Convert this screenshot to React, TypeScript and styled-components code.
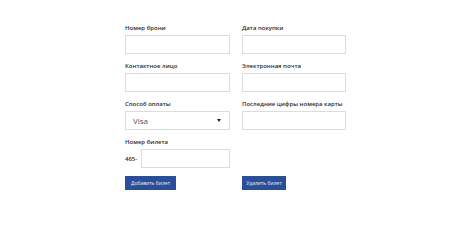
import styled, { createGlobalStyle } from "styled-components";

const GlobalStyle = createGlobalStyle`
  html, body {
    margin: 0;
    padding: 0;
    background: #ffffff;
    font-family: "Open Sans", "Liberation Sans", sans-serif;
  }
`;

const Page = styled.div`
  padding: 24px 0 0 125px;
`;

const Form = styled.div`
  display: grid;
  grid-template-columns: 105px 104px;
  column-gap: 12px;
  row-gap: 8px;
`;

const Field = styled.div`
  display: flex;
  flex-direction: column;
`;

const Label = styled.div`
  height: 8px;
  line-height: 8px;
  margin-bottom: 3px;
  font-size: 6px;
  font-weight: 600;
  color: #2b2b2b;
  white-space: nowrap;
`;

const Input = styled.div`
  box-sizing: border-box;
  height: 19px;
  border: 1px solid #dcdcdc;
  background: #fff;
`;

const Select = styled(Input)`
  display: flex;
  align-items: center;
  justify-content: space-between;
  padding: 0 8px 0 7px;
  font-size: 8px;
  color: #555;
`;

const Caret = styled.span`
  width: 0;
  height: 0;
  border-left: 2.5px solid transparent;
  border-right: 2.5px solid transparent;
  border-top: 3px solid #222;
`;

const Prefixed = styled.div`
  display: flex;
  align-items: center;

  & > div {
    flex: 1;
  }
`;

const Prefix = styled.span`
  width: 16px;
  font-size: 6px;
  font-weight: 600;
  color: #2b2b2b;
`;

const Button = styled.button<{ $w: number }>`
  justify-self: start;
  height: 14px;
  width: ${(p) => p.$w}px;
  padding: 0;
  border: none;
  background: #2a4f98;
  color: #e8eefb;
  font-family: "Open Sans", "Liberation Sans", sans-serif;
  font-size: 5px;
`;

export default function App() {
  return (
    <>
      <GlobalStyle />
      <Page>
        <Form>
          <Field>
            <Label>Номер брони</Label>
            <Input />
          </Field>
          <Field>
            <Label>Дата покупки</Label>
            <Input />
          </Field>
          <Field>
            <Label>Контактное лицо</Label>
            <Input />
          </Field>
          <Field>
            <Label>Электронная почта</Label>
            <Input />
          </Field>
          <Field>
            <Label>Способ оплаты</Label>
            <Select>
              Visa
              <Caret />
            </Select>
          </Field>
          <Field>
            <Label>Последние цифры номера карты</Label>
            <Input />
          </Field>
          <Field>
            <Label>Номер билета</Label>
            <Prefixed>
              <Prefix>465-</Prefix>
              <Input />
            </Prefixed>
          </Field>
          <div />
          <Button $w={51}>Добавить билет</Button>
          <Button $w={44}>Удалить билет</Button>
        </Form>
      </Page>
    </>
  );
}
